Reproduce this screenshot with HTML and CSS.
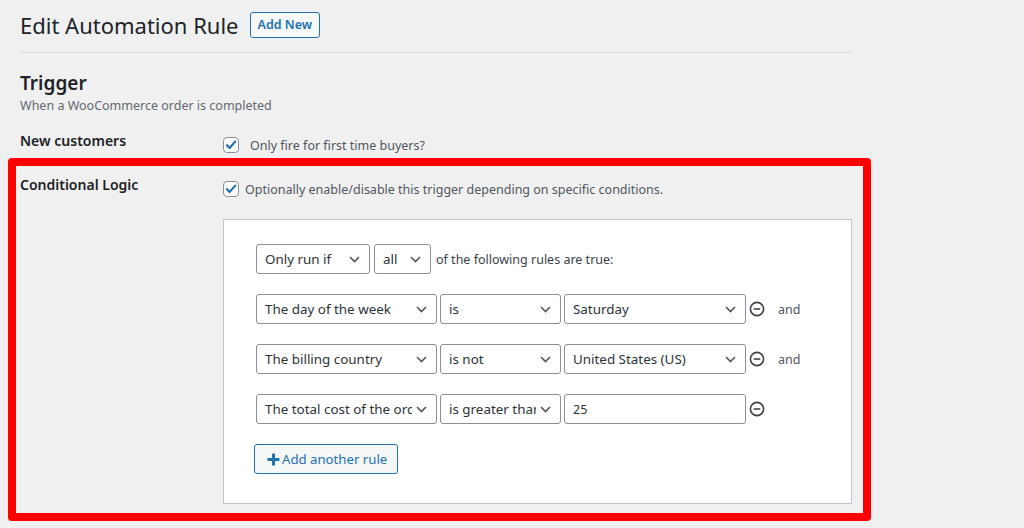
FILE: index.html
```html
<!DOCTYPE html>
<html>
<head>
    <title>Edit Automation Rule</title>
    <link rel="stylesheet" href="styles.css">
</head>
<body>
    <div class="wrap">
        <div class="page-head">
            <h1>Edit Automation Rule</h1>
            <a class="page-title-action" href="#">Add New</a>
        </div>
        <hr class="sep">

        <h2 class="section-title">Trigger</h2>
        <p class="section-desc">When a WooCommerce order is completed</p>

        <div class="field-row">
            <div class="field-label">New customers</div>
            <div class="field-body">
                <label class="check">
                    <span class="box"><svg width="14" height="14" viewBox="0 0 14 14"><path d="M3 7.2l2.6 2.8L11.2 3.6" fill="none" stroke="#2271b1" stroke-width="2.2" stroke-linecap="round" stroke-linejoin="round"/></svg></span>
                    <span class="check-text wide">Only fire for first time buyers?</span>
                </label>
            </div>
        </div>

        <div class="field-row highlight">
            <div class="field-label">Conditional Logic</div>
            <div class="field-body">
                <label class="check">
                    <span class="box"><svg width="14" height="14" viewBox="0 0 14 14"><path d="M3 7.2l2.6 2.8L11.2 3.6" fill="none" stroke="#2271b1" stroke-width="2.2" stroke-linecap="round" stroke-linejoin="round"/></svg></span>
                    <span class="check-text">Optionally enable/disable this trigger depending on specific conditions.</span>
                </label>

                <div class="rules-panel">
                    <div class="rule-line">
                        <div class="select w-runif"><span class="val">Only run if</span><svg class="chev" width="11" height="7" viewBox="0 0 11 7"><path d="M1 1l4.5 4.5L10 1" fill="none" stroke="#50575e" stroke-width="1.6"/></svg></div>
                        <div class="select w-all"><span class="val">all</span><svg class="chev" width="11" height="7" viewBox="0 0 11 7"><path d="M1 1l4.5 4.5L10 1" fill="none" stroke="#50575e" stroke-width="1.6"/></svg></div>
                        <span class="rule-text">of the following rules are true:</span>
                    </div>

                    <div class="rule-line">
                        <div class="select w-field"><span class="val">The day of the week</span><svg class="chev" width="11" height="7" viewBox="0 0 11 7"><path d="M1 1l4.5 4.5L10 1" fill="none" stroke="#50575e" stroke-width="1.6"/></svg></div>
                        <div class="select w-op"><span class="val">is</span><svg class="chev" width="11" height="7" viewBox="0 0 11 7"><path d="M1 1l4.5 4.5L10 1" fill="none" stroke="#50575e" stroke-width="1.6"/></svg></div>
                        <div class="select w-value"><span class="val">Saturday</span><svg class="chev" width="11" height="7" viewBox="0 0 11 7"><path d="M1 1l4.5 4.5L10 1" fill="none" stroke="#50575e" stroke-width="1.6"/></svg></div>
                        <svg class="remove" width="16" height="16" viewBox="0 0 16 16"><circle cx="8" cy="8" r="6.6" fill="none" stroke="#3c434a" stroke-width="1.6"/><path d="M4.8 8h6.4" stroke="#3c434a" stroke-width="1.6"/></svg>
                        <span class="joiner">and</span>
                    </div>

                    <div class="rule-line">
                        <div class="select w-field"><span class="val">The billing country</span><svg class="chev" width="11" height="7" viewBox="0 0 11 7"><path d="M1 1l4.5 4.5L10 1" fill="none" stroke="#50575e" stroke-width="1.6"/></svg></div>
                        <div class="select w-op"><span class="val">is not</span><svg class="chev" width="11" height="7" viewBox="0 0 11 7"><path d="M1 1l4.5 4.5L10 1" fill="none" stroke="#50575e" stroke-width="1.6"/></svg></div>
                        <div class="select w-value"><span class="val">United States (US)</span><svg class="chev" width="11" height="7" viewBox="0 0 11 7"><path d="M1 1l4.5 4.5L10 1" fill="none" stroke="#50575e" stroke-width="1.6"/></svg></div>
                        <svg class="remove" width="16" height="16" viewBox="0 0 16 16"><circle cx="8" cy="8" r="6.6" fill="none" stroke="#3c434a" stroke-width="1.6"/><path d="M4.8 8h6.4" stroke="#3c434a" stroke-width="1.6"/></svg>
                        <span class="joiner">and</span>
                    </div>

                    <div class="rule-line">
                        <div class="select w-field"><span class="val">The total cost of the order</span><svg class="chev" width="11" height="7" viewBox="0 0 11 7"><path d="M1 1l4.5 4.5L10 1" fill="none" stroke="#50575e" stroke-width="1.6"/></svg></div>
                        <div class="select w-op"><span class="val">is greater than</span><svg class="chev" width="11" height="7" viewBox="0 0 11 7"><path d="M1 1l4.5 4.5L10 1" fill="none" stroke="#50575e" stroke-width="1.6"/></svg></div>
                        <div class="text-input w-value">25</div>
                        <svg class="remove" width="16" height="16" viewBox="0 0 16 16"><circle cx="8" cy="8" r="6.6" fill="none" stroke="#3c434a" stroke-width="1.6"/><path d="M4.8 8h6.4" stroke="#3c434a" stroke-width="1.6"/></svg>
                    </div>

                    <button class="add-rule"><svg width="13" height="13" viewBox="0 0 13 13"><path d="M6.5 0.5v12M0.5 6.5h12" stroke="#2271b1" stroke-width="3"/></svg>Add another rule</button>
                </div>
            </div>
        </div>
    </div>
</body>
</html>
```

FILE: styles.css
```css
body {
    margin: 0;
    background: #f0f0f1;
    color: #3c434a;
    font-family: "Noto Sans", "Open Sans", sans-serif;
    font-size: 12.5px;
}
.wrap {
    width: 832px;
    padding: 12px 0 0 20px;
}
.page-head {
    display: flex;
    align-items: center;
    height: 26px;
}
.page-head h1 {
    margin: 0;
    font-size: 22px;
    font-weight: 400;
    color: #1d2327;
    line-height: 26px;
}
.page-title-action {
    margin-left: 11px;
    height: 24px;
    padding: 0 7px;
    border: 1px solid #2271b1;
    border-radius: 3px;
    background: #f6f7f7;
    color: #2271b1;
    font-size: 12.5px;
    font-weight: 600;
    line-height: 24px;
    text-decoration: none;
}
.sep {
    margin: 14px 0 0;
    border: none;
    border-top: 1px solid #dcdcde;
}
.section-title {
    margin: 18px 0 0;
    font-size: 19px;
    font-weight: 600;
    line-height: 24px;
    color: #1d2327;
}
.section-desc {
    margin: 2px 0 0;
    line-height: 18px;
    color: #646970;
}
.field-row {
    display: flex;
    margin-top: 16px;
}
.field-label {
    width: 203px;
    flex-shrink: 0;
    font-size: 14px;
    font-weight: 600;
    line-height: 20px;
    color: #1d2327;
}
.field-body {
    flex: 1;
    padding-top: 6px;
}
.check {
    display: flex;
    align-items: center;
    height: 16px;
}
.box {
    width: 14px;
    height: 14px;
    border: 1px solid #8c8f94;
    border-radius: 4px;
    background: #fff;
    display: flex;
    align-items: center;
    justify-content: center;
}
.check-text {
    margin-left: 6px;
    color: #50575e;
    line-height: 16px;
    padding-top: 1px;
}
.check-text.wide {
    margin-left: 11px;
}
.highlight {
    box-sizing: border-box;
    margin: 5px 0 0 -12px;
    width: 863px;
    border: 8px solid #ff0000;
    border-radius: 4px;
    padding: 9px 11px 9px 4px;
}
.rules-panel {
    margin-top: 22px;
    background: #fff;
    border: 1px solid #c3c4c7;
    padding: 24px 32px 29px;
}
.rule-line {
    display: flex;
    align-items: center;
    height: 30px;
    margin-bottom: 20px;
}
.select, .text-input {
    box-sizing: border-box;
    height: 30px;
    border: 1px solid #8c8f94;
    border-radius: 3px;
    background: #fff;
    color: #2c3338;
    font-size: 13.4px;
    display: flex;
    align-items: center;
    padding: 0 8px;
    margin-right: 3px;
}
.select .val {
    flex: 1;
    overflow: hidden;
    white-space: nowrap;
}
.select .chev {
    flex-shrink: 0;
    margin-left: 4px;
    margin-right: 1px;
}
.text-input {
    font-size: 12.5px;
}
.w-runif { width: 114px; margin-right: 4px; }
.w-all { width: 57px; margin-right: 5px; }
.w-field { width: 181px; }
.w-op { width: 121px; }
.w-value { width: 182px; margin-right: 3px; }
.rule-text {
    color: #3c434a;
}
.remove {
    flex-shrink: 0;
}
.joiner {
    margin-left: 13px;
    color: #50575e;
}
.add-rule {
    display: flex;
    align-items: center;
    margin-left: -2px;
    height: 30px;
    padding: 0 10px 0 12px;
    border: 1px solid #2271b1;
    border-radius: 3px;
    background: #f6f7f7;
    color: #2271b1;
    font-family: inherit;
    font-size: 13.2px;
    cursor: pointer;
}
.add-rule svg {
    margin-right: 2px;
}
```
